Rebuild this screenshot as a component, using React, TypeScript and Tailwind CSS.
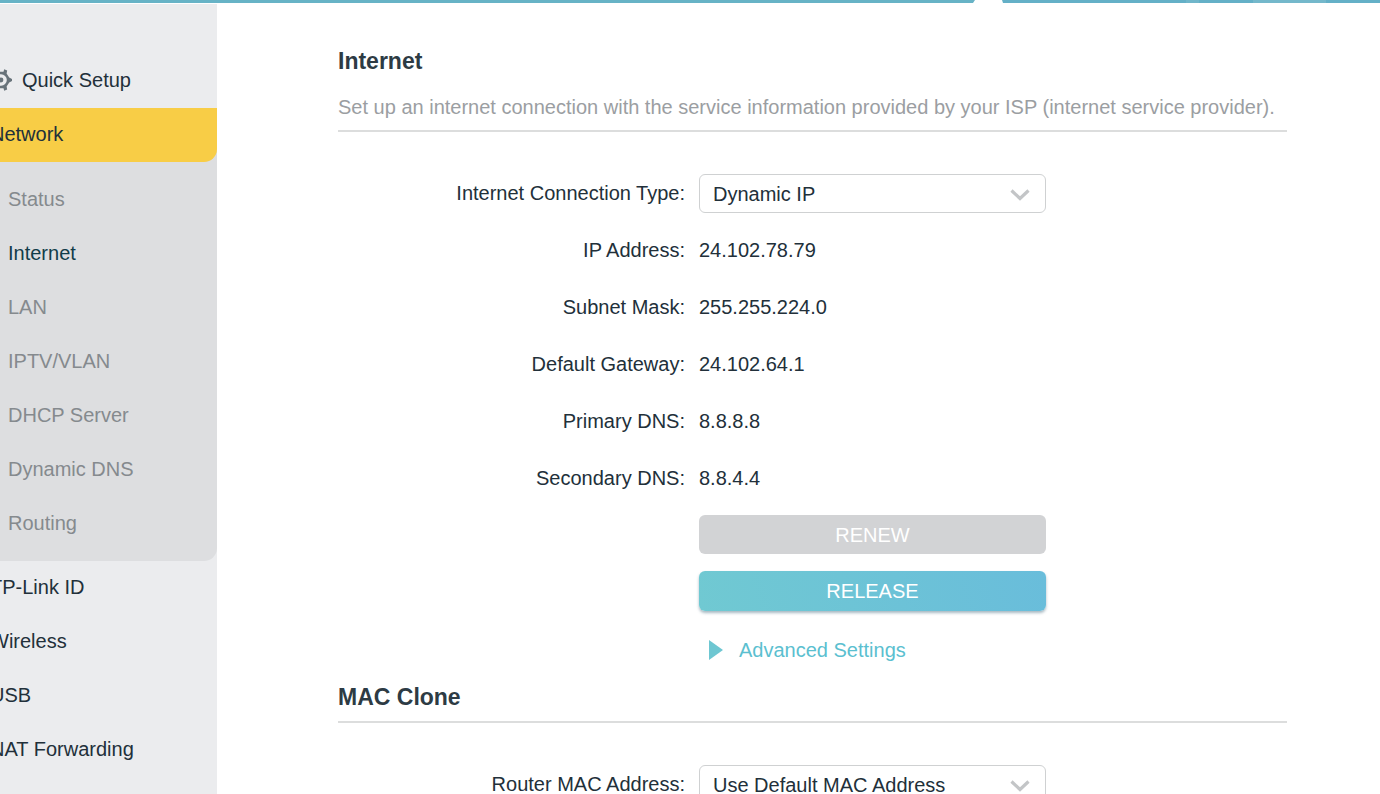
import React, { useState } from 'react';

const SUB_ITEMS = ['Status', 'Internet', 'LAN', 'IPTV/VLAN', 'DHCP Server', 'Dynamic DNS', 'Routing'];
const MORE_ITEMS = ['TP-Link ID', 'Wireless', 'USB', 'NAT Forwarding'];

const ADDRESSES = [
  { label: 'IP Address:', value: '24.102.78.79' },
  { label: 'Subnet Mask:', value: '255.255.224.0' },
  { label: 'Default Gateway:', value: '24.102.64.1' },
  { label: 'Primary DNS:', value: '8.8.8.8' },
  { label: 'Secondary DNS:', value: '8.8.4.4' },
];

const GearIcon = () => (
  <svg width="22" height="24" viewBox="0 0 22 24" fill="none" className="shrink-0">
    <path
      d="M8.5 3.8 H13.5 L14.2 1.2 L17.2 2.4 L16.6 5.4 L19.2 9.6 L22 11 V13 L19.2 14.4 L16.6 18.6 L17.2 21.6 L14.2 22.8 L13.5 20.2 H8.5 L7.8 22.8 L4.8 21.6 L5.4 18.6 L2.8 14.4 L0 13 V11 L2.8 9.6 L5.4 5.4 L4.8 2.4 L7.8 1.2 Z"
      fill="#68737a"
    />
    <circle cx="11" cy="12" r="5.8" fill="#ebecee" />
    <circle cx="11" cy="12" r="2.4" fill="#68737a" />
  </svg>
);

interface SelectFieldProps {
  id: string;
  label: string;
  options: string[];
}

const SelectField: React.FC<SelectFieldProps> = ({ id, label, options }) => (
  <div className="flex gap-[14px]">
    <label htmlFor={id} className="w-[347px] shrink-0 text-right leading-[39px]">
      {label}
    </label>
    <div className="relative w-[347px] shrink-0">
      <select
        id={id}
        className="block h-[39px] w-full appearance-none rounded-md border border-[#cfd1d2] bg-white pr-12 pl-[13px] text-[#22303a] outline-none"
      >
        {options.map((option) => (
          <option key={option}>{option}</option>
        ))}
      </select>
      <svg width="20" height="12" viewBox="0 0 20 12" fill="none" className="pointer-events-none absolute top-[15px] right-4">
        <path d="M1.5 1.5 L10 9.5 L18.5 1.5" stroke="#c3c5c7" strokeWidth="3.2" />
      </svg>
    </div>
  </div>
);

const Sidebar = () => {
  const [active, setActive] = useState('Internet');

  return (
    <aside className="w-[217px] shrink-0 overflow-hidden bg-[#ebecee] pt-[50px]">
      <nav className="-ml-[10px]">
        <a href="#setup" className="flex h-[54px] items-center gap-[10px] pb-[2px]">
          <GearIcon />
          Quick Setup
        </a>
        <div className="rounded-br-[13px] bg-[#dddee0]">
          {/* keeps the grey panel visible behind the rounded corner */}
          <a href="#network" className="flex h-[54px] items-center rounded-br-[13px] bg-[#f8cd46] pb-[2px]">
            Network
          </a>
          <ul className="pt-[11px] pb-[10px] pl-[18px]">
            {SUB_ITEMS.map((item) => (
              <li key={item}>
                <a
                  href="#network"
                  onClick={() => setActive(item)}
                  className={`flex h-[54px] items-center pb-[2px] ${active === item ? 'text-[#113c49]' : 'text-[#858a8e]'}`}
                >
                  {item}
                </a>
              </li>
            ))}
          </ul>
        </div>
        {MORE_ITEMS.map((item) => (
          <a key={item} href="#more" className="flex h-[54px] items-center pb-[2px]">
            {item}
          </a>
        ))}
      </nav>
    </aside>
  );
};

export default function App() {
  return (
    <div className="flex h-screen flex-col overflow-hidden bg-white font-['Liberation_Sans',Arial,sans-serif] text-[20px] text-[#22303a]">
      {/* bottom edge of the top bar, with the pointer of the selected tab */}
      <header className="mb-px flex h-[3px] shrink-0">
        <div className="flex-1 bg-[#67b3c6]" />
        <svg width="30" height="3" viewBox="0 0 30 3" className="shrink-0">
          <path d="M0 0 H2 L0 3 Z M30 0 H29 L30 3 Z" fill="#67b3c6" />
        </svg>
        <div className="flex w-[377px] justify-end gap-[54px] bg-[#64b0c7] pr-[54px]">
          <div className="w-[13px] bg-[#70b6ca]" />
          <div className="w-[73px] bg-[#74b8cb]" />
        </div>
      </header>

      <div className="flex min-h-0 flex-1">
        <Sidebar />
        <main className="min-w-0 flex-1 overflow-hidden pt-[41px] pr-[93px] pl-[121px]">
          <section>
            <h2 className="text-[23px] leading-8 font-bold text-[#2d3b44]">Internet</h2>
            <p className="mt-[14px] border-b-2 border-[#dcdddd] pb-[7px] leading-8 whitespace-nowrap text-[#9b9ea2]">
              Set up an internet connection with the service information provided by your ISP (internet service provider).
            </p>

            <div className="mt-[42px] flex flex-col gap-[17px]">
              <SelectField id="connection" label="Internet Connection Type:" options={['Dynamic IP', 'Static IP', 'PPPoE']} />
              <dl className="flex flex-col gap-[17px]">
                {ADDRESSES.map((row) => (
                  <div key={row.label} className="flex gap-[14px] leading-[40px]">
                    <dt className="w-[347px] shrink-0 text-right">{row.label}</dt>
                    <dd>{row.value}</dd>
                  </div>
                ))}
              </dl>
              <div className="flex w-[347px] flex-col gap-[17px] self-start ml-[361px]">
                <button disabled className="h-[39px] rounded-md bg-[#d2d3d5] text-white">
                  RENEW
                </button>
                <button className="h-[40px] rounded-md bg-linear-[75deg] from-[#70c9d2] to-[#69bddb] text-white shadow-[0_2px_3px_rgba(60,100,120,0.45)]">
                  RELEASE
                </button>
              </div>
            </div>

            <button className="mt-[23px] ml-[371px] flex h-8 items-center gap-4 text-[#5bbfd0]">
              <svg width="14" height="20" viewBox="0 0 14 20">
                <path d="M0 0 L14 10 L0 20 Z" fill="#6ec7d2" />
              </svg>
              Advanced Settings
            </button>
          </section>

          <section className="mt-[15px]">
            <h2 className="border-b-2 border-[#dcdddd] pb-[8px] text-[23px] leading-8 font-bold text-[#2d3b44]">MAC Clone</h2>
            <div className="mt-[42px]">
              <SelectField
                id="mac"
                label="Router MAC Address:"
                options={['Use Default MAC Address', 'Clone Current Device MAC', 'Use Custom MAC Address']}
              />
            </div>
          </section>
        </main>
      </div>
    </div>
  );
}
